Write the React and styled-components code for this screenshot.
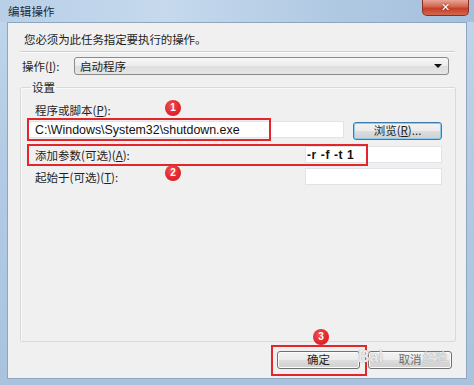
import React from "react";
import styled, { createGlobalStyle } from "styled-components";

const Global = createGlobalStyle`
  html, body { margin: 0; padding: 0; background: #b9cfe6; }
  body { font-family: "Noto Sans CJK SC", "Liberation Sans", sans-serif; }
`;

const Window = styled.div`
  position: relative;
  width: 474px;
  height: 385px;
  display: flex;
  flex-direction: column;
  box-sizing: border-box;
  background: linear-gradient(180deg, #c0d6ec 0%, #b3cbe4 40%, #a9c3df 100%);
  overflow: hidden;
`;

const TitleBar = styled.div`
  height: 22px;
  flex: none;
  display: flex;
  align-items: center;
  padding-left: 8px;
  position: relative;
  background: linear-gradient(90deg, #b8cfe7 0%, #c6d9ed 35%, #b0c9e3 70%, #a5c0dc 100%);
`;

const Title = styled.span`
  font-size: 11.5px;
  line-height: 14px;
  color: #1d2b3c;
  letter-spacing: 0.2px;
`;

const CloseButton = styled.div`
  position: absolute;
  top: 0;
  right: 5px;
  width: 47px;
  height: 16px;
  box-sizing: border-box;
  border: 1px solid #8a2f24;
  border-top: none;
  border-radius: 0 0 5px 5px;
  background: linear-gradient(180deg, #e7a596 0%, #d4634d 45%, #c43f27 55%, #d2674f 100%);
  display: flex;
  align-items: center;
  justify-content: center;
  color: #fff;
  font-family: "DejaVu Sans", sans-serif;
  font-weight: bold;
  font-size: 11px;
  line-height: 1;
  text-shadow: 0 0 2px #6b1a10;
`;

const Client = styled.div`
  flex: 1;
  margin: 0 7px 6px 7px;
  border: 1px solid #8fa6bf;
  background: #f0f0f0;
  display: flex;
  flex-direction: column;
  padding: 0 10px 9px 12px;
  min-height: 0;
`;

const Prompt = styled.div`
  margin: 8px 0 0 4px;
  font-size: 11.5px;
  line-height: 16px;
  color: #1e1e1e;
  letter-spacing: -0.1px;
`;

const Separator = styled.div`
  margin-top: 4px;
  height: 1px;
  background: #d0d0d0;
  border-bottom: 1px solid #fbfbfb;
  margin-right: 1px;
`;

const ActionRow = styled.div`
  display: flex;
  align-items: center;
  margin-top: 4px;
  margin-right: 7px;
`;

const Label = styled.span`
  font-size: 11.5px;
  line-height: 16px;
  color: #1e1e1e;
  white-space: nowrap;
  width: ${(p) => p.$width || "auto"};
  margin-left: ${(p) => p.$indent || "0px"};
  flex: none;
`;

const Select = styled.div`
  flex: 1;
  height: 18px;
  box-sizing: border-box;
  border: 1px solid #8b8b8b;
  border-radius: 3px;
  background: linear-gradient(180deg, #f7f7f7 0%, #ececec 50%, #dedede 51%, #e6e6e6 100%);
  display: flex;
  align-items: center;
  padding: 0 6px 0 5px;
  font-size: 11.5px;
  color: #1e1e1e;
`;

const SelectText = styled.span`
  flex: 1;
`;

const Arrow = styled.span`
  width: 0;
  height: 0;
  border-left: 4px solid transparent;
  border-right: 4px solid transparent;
  border-top: 4px solid #111;
`;

const Group = styled.fieldset`
  flex: 1;
  margin: 5px 0 0 0;
  padding: 8px 13px 0 6px;
  border: 1px solid #d9d9d9;
  box-shadow: inset 1px 1px 0 #fafafa;
  border-radius: 2px;
  min-width: 0;
  display: flex;
  flex-direction: column;
`;

const Legend = styled.legend`
  margin-left: 4px;
  padding: 0 1px;
  font-size: 11.5px;
  line-height: 14px;
  color: #1e1e1e;
`;

const FieldRow = styled.div`
  display: flex;
  align-items: ${(p) => (p.$top ? "flex-start" : "center")};
  margin-top: ${(p) => p.$gap || "0px"};
`;

const TextBox = styled.div`
  box-sizing: border-box;
  height: 17px;
  width: ${(p) => p.$width};
  margin-left: ${(p) => (p.$push ? "auto" : "0")};
  background: #fff;
  border: 1px solid #e2e3e6;
  display: flex;
  align-items: center;
  padding-left: ${(p) => p.$pad || "1px"};
  color: #111;
  font-family: "Liberation Sans", Arial, sans-serif;
  font-size: ${(p) => p.$size || "12px"};
  font-weight: ${(p) => p.$weight || 400};
  letter-spacing: ${(p) => p.$spacing || "0px"};
  white-space: nowrap;
  overflow: hidden;
`;

const PushButton = styled.div`
  box-sizing: border-box;
  width: ${(p) => p.$width};
  height: 18px;
  margin-top: ${(p) => p.$offset || "0px"};
  margin-left: ${(p) => p.$gap || "0px"};
  border: 1px solid ${(p) => (p.$focus ? "#3d7bad" : "#707070")};
  box-shadow: ${(p) => (p.$focus ? "inset 0 0 0 1px #8ccbec" : "inset 0 0 0 1px #fcfcfc")};
  border-radius: 3px;
  background: linear-gradient(180deg, #f3f3f3 0%, #ebebeb 48%, #dddddd 52%, #cfcfcf 100%);
  display: flex;
  align-items: center;
  justify-content: center;
  font-size: 11.5px;
  line-height: 1;
  color: ${(p) => (p.$dim ? "#6c6c6c" : "#1e1e1e")};
  position: relative;
`;

const Footer = styled.div`
  display: flex;
  justify-content: flex-end;
  margin: 9px 4px 0 0;
`;

const Callout = styled.div`
  position: absolute;
  left: ${(p) => p.$x}px;
  top: ${(p) => p.$y}px;
  width: ${(p) => p.$w}px;
  height: ${(p) => p.$h}px;
  box-sizing: border-box;
  border: 2px solid #e3262c;
  pointer-events: none;
`;

const Badge = styled.div`
  position: absolute;
  left: ${(p) => p.$x - 8}px;
  top: ${(p) => p.$y - 8}px;
  width: 16px;
  height: 16px;
  border-radius: 50%;
  background: radial-gradient(circle at 40% 35%, #f2504f 0%, #e0242a 60%, #c81d22 100%);
  color: #fff;
  font-family: "Liberation Sans", Arial, sans-serif;
  font-weight: bold;
  font-size: 10px;
  line-height: 16px;
  text-align: center;
`;

const Watermark = styled.div`
  position: absolute;
  left: 358px;
  top: 348px;
  display: flex;
  align-items: flex-end;
  color: rgba(255, 255, 255, 0.8);
  font-family: "Liberation Sans", Arial, sans-serif;
  font-weight: bold;
  font-size: 16px;
  text-shadow: 0 0 1px #a0a0a0, 0 0 1px #a0a0a0;
  pointer-events: none;
`;

const WatermarkCJK = styled.span`
  font-family: "Noto Sans CJK SC", sans-serif;
  font-size: 12px;
  font-weight: normal;
  margin-left: 40px;
  margin-bottom: 1px;
`;

export default function App() {
  return (
    <>
      <Global />
      <Window>
        <TitleBar>
          <Title>编辑操作</Title>
          <CloseButton>✕</CloseButton>
        </TitleBar>
        <Client>
          <Prompt>您必须为此任务指定要执行的操作。</Prompt>
          <Separator />
          <ActionRow>
            <Label $width="52px" $indent="2px">
              操作(<u>I</u>):
            </Label>
            <Select>
              <SelectText>启动程序</SelectText>
              <Arrow />
            </Select>
          </ActionRow>
          <Group>
            <Legend>设置</Legend>
            <Label $indent="8px">
              程序或脚本(<u>P</u>):
            </Label>
            <FieldRow $top $gap="3px">
              <TextBox $width="317px" $pad="7px" $size="12.4px">
                C:\Windows\System32\shutdown.exe
              </TextBox>
              <PushButton $width="89px" $offset="1px" $gap="9px" $focus>
                浏览(<u>R</u>)...
              </PushButton>
            </FieldRow>
            <FieldRow $gap="6px">
              <Label $indent="8px">
                添加参数(可选)(<u>A</u>):
              </Label>
              <TextBox $width="137px" $push $weight={700} $size="12px" $spacing="0.6px" $pad="1px">
                -r -f -t 1
              </TextBox>
            </FieldRow>
            <FieldRow $gap="5px">
              <Label $indent="8px">
                起始于(可选)(<u>T</u>):
              </Label>
              <TextBox $width="137px" $push />
            </FieldRow>
          </Group>
          <Footer>
            <PushButton $width="83px">确定</PushButton>
            <PushButton $width="84px" $gap="8px" $dim>
              取消
            </PushButton>
          </Footer>
        </Client>

        <Callout $x={27} $y={118} $w={244} $h={23} />
        <Callout $x={27} $y={144} $w={341} $h={22} />
        <Callout $x={271} $y={345} $w={96} $h={31} />
        <Badge $x={173} $y={108}>1</Badge>
        <Badge $x={173} $y={173}>2</Badge>
        <Badge $x={321} $y={337}>3</Badge>
        <Watermark>
          Bai
          <WatermarkCJK>经验</WatermarkCJK>
        </Watermark>
      </Window>
    </>
  );
}
